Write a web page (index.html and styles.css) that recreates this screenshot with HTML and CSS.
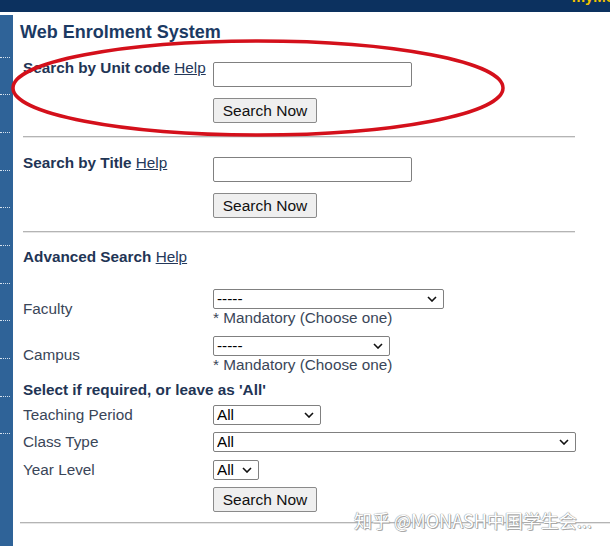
FILE: index.html
```html
<!DOCTYPE html>
<html>
<head>
<meta charset="utf-8">
<title>Web Enrolment System</title>
<link rel="stylesheet" href="styles.css">
</head>
<body>
<div class="topbar"><span class="brand">myMonash</span></div>
<div class="layout">
  <div class="sidebar">
    <div class="dots first"></div>
    <div class="dots"></div>
    <div class="dots"></div>
    <div class="dots"></div>
    <div class="dots"></div>
    <div class="dots"></div>
    <div class="dots"></div>
    <div class="dots"></div>
    <div class="dots"></div>
    <div class="dots"></div>
    <div class="dots"></div>
  </div>
  <div class="main">
    <h1 class="title">Web Enrolment System</h1>

    <div class="simple">
      <div class="label"><b>Search by Unit code</b> <a href="#" class="help">Help</a></div>
      <div class="controls">
        <input type="text" class="text-input">
        <button class="btn">Search Now</button>
      </div>
    </div>
    <div class="rule"></div>

    <div class="simple second">
      <div class="label"><b>Search by Title</b> <a href="#" class="help">Help</a></div>
      <div class="controls">
        <input type="text" class="text-input">
        <button class="btn">Search Now</button>
      </div>
    </div>
    <div class="rule"></div>

    <div class="adv-head"><b>Advanced Search</b> <a href="#" class="help">Help</a></div>

    <div class="adv">
      <div class="plain">Faculty</div>
      <div class="cell">
        <select class="sel w-fac"><option>-----</option></select>
        <div class="note">* Mandatory (Choose one)</div>
      </div>

      <div class="plain">Campus</div>
      <div class="cell">
        <select class="sel w-camp"><option>-----</option></select>
        <div class="note">* Mandatory (Choose one)</div>
      </div>

      <div class="span-all"><b>Select if required, or leave as 'All'</b></div>

      <div class="plain">Teaching Period</div>
      <div class="cell"><select class="sel w-tp"><option>All</option></select></div>

      <div class="plain">Class Type</div>
      <div class="cell"><select class="sel w-ct"><option>All</option></select></div>

      <div class="plain">Year Level</div>
      <div class="cell"><select class="sel w-yl"><option>All</option></select></div>

      <div></div>
      <div class="cell"><button class="btn">Search Now</button></div>
    </div>
    <div class="rule last"></div>
  </div>
</div>

<svg class="circle" width="610" height="160" viewBox="0 0 610 160">
  <ellipse cx="258" cy="88" rx="245" ry="47" fill="none" stroke="#d4101b" stroke-width="3.5"/>
</svg>
<div class="watermark">知乎 @MONASH中国学生会...</div>
</body>
</html>
```
FILE: styles.css
```css
html, body {
  margin: 0;
  padding: 0;
  background: #ffffff;
}
body {
  font-family: "Liberation Sans", Arial, sans-serif;
  font-size: 15.3px;
  color: #3a4658;
  width: 610px;
  height: 546px;
  overflow: hidden;
  position: relative;
}
.topbar {
  height: 12px;
  background: #0c315f;
  overflow: hidden;
  display: flex;
  justify-content: flex-end;
}
.brand {
  color: #f2c200;
  font-weight: bold;
  font-size: 15px;
  line-height: 15px;
  margin-top: -11px;
  margin-right: -40px;
  white-space: nowrap;
}
.layout {
  display: flex;
  margin-top: 3px;
  height: 531px;
}
.sidebar {
  width: 13px;
  background: #2f6398;
  flex: none;
  display: flex;
  flex-direction: column;
}
.dots {
  height: 37.7px;
  width: 10px;
  box-sizing: border-box;
  border-bottom: 1px dotted #d6e2ef;
  flex: none;
}
.dots.first {
  height: 42.5px;
}
.main {
  flex: 1;
  padding-left: 7px;
}
.title {
  margin: 7px 0 0 0;
  font-size: 18px;
  line-height: 21px;
  font-weight: bold;
  color: #1b3a63;
}
b {
  color: #1f3555;
}
.help {
  color: #24385a;
  text-decoration: underline;
}
.simple {
  display: grid;
  grid-template-columns: 190px 1fr;
  margin-top: 15px;
  padding-left: 3px;
}
.simple.second {
  margin-top: 15px;
}
.label {
  line-height: 20px;
}
.controls {
  display: flex;
  flex-direction: column;
  align-items: flex-start;
  gap: 11px;
  padding-top: 4px;
}
.text-input {
  width: 199px;
  height: 25px;
  box-sizing: border-box;
  border: 1px solid #808080;
  border-radius: 2px;
  padding: 0 4px;
  margin: 0;
  font-family: inherit;
  font-size: 15px;
}
.btn {
  width: 104px;
  height: 25px;
  box-sizing: border-box;
  border: 1px solid #8a8a8a;
  border-radius: 2px;
  background: #efefef;
  font-family: "Liberation Sans", Arial, sans-serif;
  font-size: 15.5px;
  color: #111;
  padding: 0;
  margin: 0;
}
.rule {
  height: 0;
  border-top: 1px solid #b4b4b4;
  border-bottom: 1px solid #e6e6e6;
  margin: 13px 0 0 3px;
  width: 552px;
}
.rule.last {
  margin: 10px 0 0 0;
  width: 600px;
}
.adv-head {
  margin-top: 14px;
  padding-left: 3px;
  line-height: 20px;
}
.adv {
  display: grid;
  grid-template-columns: 190px 1fr;
  row-gap: 7.5px;
  align-items: center;
  margin-top: 22px;
  padding-left: 3px;
}
.plain {
  line-height: 18px;
}
.cell {
  display: flex;
  flex-direction: column;
  align-items: flex-start;
}
.span-all {
  grid-column: 1 / 3;
  line-height: 20px;
  margin: -2px 0 -3px 0;
}
.note {
  line-height: 20px;
  margin-top: -1px;
}
.sel {
  -webkit-appearance: none;
  appearance: none;
  height: 20px;
  box-sizing: border-box;
  border: 1px solid #808080;
  border-radius: 2px;
  background-color: #fff;
  background-image: url("data:image/svg+xml,%3Csvg xmlns='http://www.w3.org/2000/svg' width='10' height='6' viewBox='0 0 10 6'%3E%3Cpath d='M1 1 L5 5 L9 1' fill='none' stroke='%23111' stroke-width='1.6'/%3E%3C/svg%3E");
  background-repeat: no-repeat;
  background-position: right 6px center;
  font-family: "Liberation Sans", Arial, sans-serif;
  font-size: 15.3px;
  line-height: 18px;
  color: #000;
  padding: 0 20px 0 3px;
  margin: 0;
}
.w-fac { width: 231px; }
.w-camp { width: 177px; }
.w-tp { width: 108px; }
.w-ct { width: 363px; }
.w-yl { width: 46px; }
.circle {
  position: absolute;
  left: 0;
  top: 0;
  pointer-events: none;
}
.watermark {
  position: absolute;
  left: 354px;
  top: 508px;
  font-family: "Noto Sans CJK SC", "Liberation Sans", sans-serif;
  font-size: 18px;
  line-height: 24px;
  color: #ffffff;
  text-shadow: 0 0 1px #8a8a8a, 0 0 1px #8a8a8a, 1px 1px 0 #b0b0b0;
  white-space: nowrap;
}
```
